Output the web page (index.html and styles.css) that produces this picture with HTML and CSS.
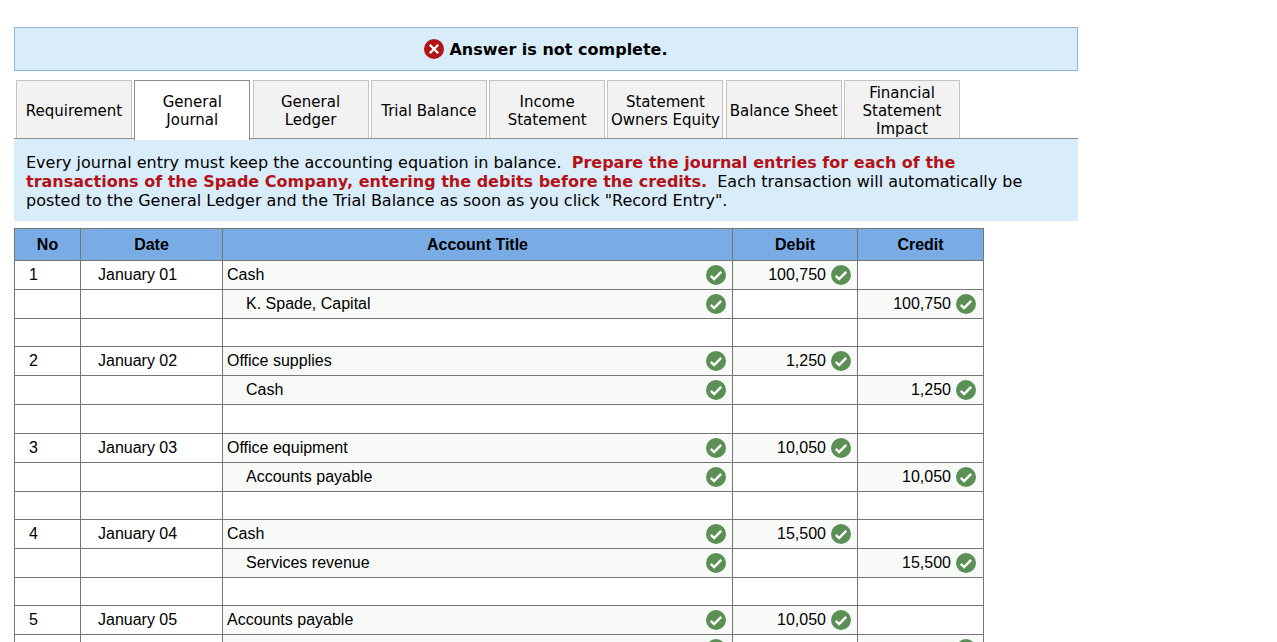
FILE: index.html
```html
<!DOCTYPE html>
<html lang="en">
<head>
<meta charset="utf-8">
<title>General Journal</title>
<link rel="stylesheet" href="styles.css">
</head>
<body>
<svg class="sprite" aria-hidden="true">
  <symbol id="check" viewBox="0 0 20 20">
    <circle cx="10" cy="10" r="10" fill="#5c8f56"/>
    <path d="M4.8 10.8 8.1 14 15.2 6.8" fill="none" stroke="#fff" stroke-width="2.4"/>
  </symbol>
</svg>
<main class="page">
  <div class="status">
    <svg class="icon" viewBox="0 0 20 20" aria-hidden="true">
      <circle cx="10" cy="10" r="10" fill="#b31217"/>
      <path d="M5.8 5.8 14.2 14.2M14.2 5.8 5.8 14.2" stroke="#fff" stroke-width="2.3"/>
    </svg>
    <span>Answer is not complete.</span>
  </div>

  <nav class="tabs">
    <div class="tab-list">
      <button class="tab">Requirement</button>
      <button class="tab active">General<br>Journal</button>
      <button class="tab">General<br>Ledger</button>
      <button class="tab">Trial Balance</button>
      <button class="tab">Income<br>Statement</button>
      <button class="tab">Statement<br>Owners Equity</button>
      <button class="tab">Balance Sheet</button>
      <button class="tab">Financial<br>Statement<br>Impact</button>
    </div>
  </nav>

  <p class="intro">Every journal entry must keep the accounting equation in balance.&nbsp; <strong>Prepare the journal entries for each of the transactions of the Spade Company, entering the debits before the credits.</strong>&nbsp; Each transaction will automatically be posted to the General Ledger and the Trial Balance as soon as you click "Record Entry".</p>

  <table class="journal">
    <colgroup><col class="c-no"><col class="c-date"><col><col class="c-debit"><col class="c-credit"></colgroup>
    <thead>
      <tr><th>No</th><th>Date</th><th>Account Title</th><th>Debit</th><th>Credit</th></tr>
    </thead>
    <tbody>
      <tr><td class="no">1</td><td class="date">January 01</td><td class="ok"><div class="entry">Cash<svg class="icon"><use href="#check"/></svg></div></td><td class="ok"><div class="amount">100,750<svg class="icon"><use href="#check"/></svg></div></td><td></td></tr>
      <tr><td></td><td></td><td class="ok"><div class="entry indent">K. Spade, Capital<svg class="icon"><use href="#check"/></svg></div></td><td></td><td class="ok"><div class="amount">100,750<svg class="icon"><use href="#check"/></svg></div></td></tr>
      <tr class="gap"><td></td><td></td><td></td><td></td><td></td></tr>
      <tr><td class="no">2</td><td class="date">January 02</td><td class="ok"><div class="entry">Office supplies<svg class="icon"><use href="#check"/></svg></div></td><td class="ok"><div class="amount">1,250<svg class="icon"><use href="#check"/></svg></div></td><td></td></tr>
      <tr><td></td><td></td><td class="ok"><div class="entry indent">Cash<svg class="icon"><use href="#check"/></svg></div></td><td></td><td class="ok"><div class="amount">1,250<svg class="icon"><use href="#check"/></svg></div></td></tr>
      <tr><td></td><td></td><td></td><td></td><td></td></tr>
      <tr><td class="no">3</td><td class="date">January 03</td><td class="ok"><div class="entry">Office equipment<svg class="icon"><use href="#check"/></svg></div></td><td class="ok"><div class="amount">10,050<svg class="icon"><use href="#check"/></svg></div></td><td></td></tr>
      <tr><td></td><td></td><td class="ok"><div class="entry indent">Accounts payable<svg class="icon"><use href="#check"/></svg></div></td><td></td><td class="ok"><div class="amount">10,050<svg class="icon"><use href="#check"/></svg></div></td></tr>
      <tr class="gap"><td></td><td></td><td></td><td></td><td></td></tr>
      <tr><td class="no">4</td><td class="date">January 04</td><td class="ok"><div class="entry">Cash<svg class="icon"><use href="#check"/></svg></div></td><td class="ok"><div class="amount">15,500<svg class="icon"><use href="#check"/></svg></div></td><td></td></tr>
      <tr><td></td><td></td><td class="ok"><div class="entry indent">Services revenue<svg class="icon"><use href="#check"/></svg></div></td><td></td><td class="ok"><div class="amount">15,500<svg class="icon"><use href="#check"/></svg></div></td></tr>
      <tr class="gap"><td></td><td></td><td></td><td></td><td></td></tr>
      <tr><td class="no">5</td><td class="date">January 05</td><td class="ok"><div class="entry">Accounts payable<svg class="icon"><use href="#check"/></svg></div></td><td class="ok"><div class="amount">10,050<svg class="icon"><use href="#check"/></svg></div></td><td></td></tr>
      <tr><td></td><td></td><td class="ok"><div class="entry indent"><svg class="icon"><use href="#check"/></svg></div></td><td></td><td class="ok"><div class="amount"><svg class="icon"><use href="#check"/></svg></div></td></tr>
    </tbody>
  </table>
</main>
</body>
</html>
```
FILE: styles.css
```css
* { box-sizing: border-box; }
body {
  margin: 0;
  height: 100vh;
  overflow: hidden;
  background: #fff;
  color: #000;
  font: 16px/19px Verdana, "DejaVu Sans", sans-serif;
}
.sprite { display: none; }
.page {
  max-width: 1092px;
  padding: 27px 14px 0;
}
.icon { width: 20px; height: 20px; flex: none; }

.status {
  display: flex;
  align-items: center;
  justify-content: center;
  gap: 5px;
  height: 44px;
  border: 1px solid #8fb5de;
  background: #d9ecfa;
  font-weight: bold;
}

.tabs {
  margin-top: 9px;
  padding-left: 2px;
  border-bottom: 1px solid #8c8c8c;
}
.tab-list {
  display: flex;
  justify-content: space-between;
  max-width: 944px;
}
.tab {
  flex: 0 1 116px;
  min-width: 0;
  height: 58px;
  padding: 2px 0 0;
  border: 1px solid #c3c3c3;
  border-bottom: 0;
  background: #f2f2f2;
  color: #000;
  font: 15px/18px Verdana, "DejaVu Sans", sans-serif;
  white-space: nowrap;
}
.tab.active {
  height: 60px;
  margin-bottom: -2px;
  padding-bottom: 2px;
  border-color: #8c8c8c;
  background: #fff;
}

.intro {
  margin: 0;
  padding: 14px 12px 11px;
  background: #d9ecfa;
}
.intro strong { color: #b31217; }

.journal {
  width: 100%;
  max-width: 970px;
  margin-top: 7px;
  border-collapse: collapse;
  table-layout: fixed;
  font-family: Arial, "Liberation Sans", sans-serif;
}
.c-no { width: 66px; }
.c-date { width: 142px; }
.c-debit { width: 125px; }
.c-credit { width: 126px; }
.journal th, .journal td {
  height: 29px;
  padding: 0 0 1px;
  border: 1px solid #767676;
}
.journal th { height: 32px; background: #79ace5; }
.journal .gap td { height: 28px; }
.journal .no { padding-left: 14px; }
.journal .date { padding-left: 17px; }
.journal .ok { background: #f8faf8; }
.entry, .amount {
  display: flex;
  align-items: center;
  justify-content: space-between;
  padding: 0 6px 0 4px;
}
.indent { padding-left: 23px; }
.entry .icon { margin-left: auto; }
.amount { justify-content: flex-end; gap: 5px; }
.journal td:last-child .amount { padding-right: 7px; }
```
